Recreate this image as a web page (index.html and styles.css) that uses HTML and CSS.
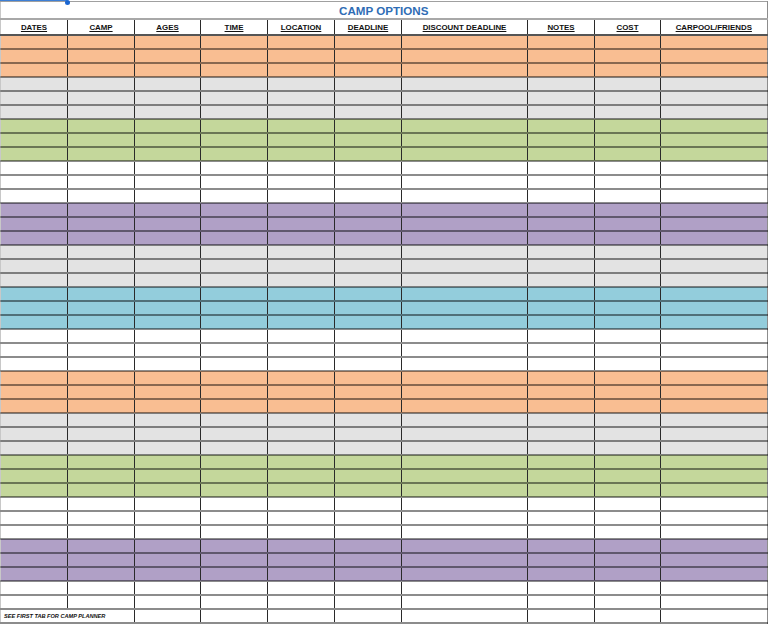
FILE: index.html
```html
<!DOCTYPE html>
<html>
<head>
<meta charset="utf-8">
<title>Camp Options</title>
<link rel="stylesheet" href="styles.css">
</head>
<body>
<div class="wrap">
<span class="sel-line"></span><span class="sel-dot"></span>
<table class="sheet">
<colgroup>
<col class="w67"><col class="w67"><col class="w66"><col class="w67"><col class="w67"><col class="w67"><col class="w126"><col class="w67"><col class="w66"><col class="w107">
</colgroup>
<tr class="title"><td colspan="10">CAMP OPTIONS</td></tr>
<tr class="head"><th>DATES</th><th>CAMP</th><th>AGES</th><th>TIME</th><th>LOCATION</th><th>DEADLINE</th><th>DISCOUNT DEADLINE</th><th>NOTES</th><th>COST</th><th>CARPOOL/FRIENDS</th></tr>
<tr class="r o"><td></td><td></td><td></td><td></td><td></td><td></td><td></td><td></td><td></td><td></td></tr>
<tr class="r o"><td></td><td></td><td></td><td></td><td></td><td></td><td></td><td></td><td></td><td></td></tr>
<tr class="r o"><td></td><td></td><td></td><td></td><td></td><td></td><td></td><td></td><td></td><td></td></tr>
<tr class="r g"><td></td><td></td><td></td><td></td><td></td><td></td><td></td><td></td><td></td><td></td></tr>
<tr class="r g"><td></td><td></td><td></td><td></td><td></td><td></td><td></td><td></td><td></td><td></td></tr>
<tr class="r g"><td></td><td></td><td></td><td></td><td></td><td></td><td></td><td></td><td></td><td></td></tr>
<tr class="r gr"><td></td><td></td><td></td><td></td><td></td><td></td><td></td><td></td><td></td><td></td></tr>
<tr class="r gr"><td></td><td></td><td></td><td></td><td></td><td></td><td></td><td></td><td></td><td></td></tr>
<tr class="r gr"><td></td><td></td><td></td><td></td><td></td><td></td><td></td><td></td><td></td><td></td></tr>
<tr class="r w"><td></td><td></td><td></td><td></td><td></td><td></td><td></td><td></td><td></td><td></td></tr>
<tr class="r w"><td></td><td></td><td></td><td></td><td></td><td></td><td></td><td></td><td></td><td></td></tr>
<tr class="r w"><td></td><td></td><td></td><td></td><td></td><td></td><td></td><td></td><td></td><td></td></tr>
<tr class="r p"><td></td><td></td><td></td><td></td><td></td><td></td><td></td><td></td><td></td><td></td></tr>
<tr class="r p"><td></td><td></td><td></td><td></td><td></td><td></td><td></td><td></td><td></td><td></td></tr>
<tr class="r p"><td></td><td></td><td></td><td></td><td></td><td></td><td></td><td></td><td></td><td></td></tr>
<tr class="r g"><td></td><td></td><td></td><td></td><td></td><td></td><td></td><td></td><td></td><td></td></tr>
<tr class="r g"><td></td><td></td><td></td><td></td><td></td><td></td><td></td><td></td><td></td><td></td></tr>
<tr class="r g"><td></td><td></td><td></td><td></td><td></td><td></td><td></td><td></td><td></td><td></td></tr>
<tr class="r b"><td></td><td></td><td></td><td></td><td></td><td></td><td></td><td></td><td></td><td></td></tr>
<tr class="r b"><td></td><td></td><td></td><td></td><td></td><td></td><td></td><td></td><td></td><td></td></tr>
<tr class="r b"><td></td><td></td><td></td><td></td><td></td><td></td><td></td><td></td><td></td><td></td></tr>
<tr class="r w"><td></td><td></td><td></td><td></td><td></td><td></td><td></td><td></td><td></td><td></td></tr>
<tr class="r w"><td></td><td></td><td></td><td></td><td></td><td></td><td></td><td></td><td></td><td></td></tr>
<tr class="r w"><td></td><td></td><td></td><td></td><td></td><td></td><td></td><td></td><td></td><td></td></tr>
<tr class="r o"><td></td><td></td><td></td><td></td><td></td><td></td><td></td><td></td><td></td><td></td></tr>
<tr class="r o"><td></td><td></td><td></td><td></td><td></td><td></td><td></td><td></td><td></td><td></td></tr>
<tr class="r o"><td></td><td></td><td></td><td></td><td></td><td></td><td></td><td></td><td></td><td></td></tr>
<tr class="r g"><td></td><td></td><td></td><td></td><td></td><td></td><td></td><td></td><td></td><td></td></tr>
<tr class="r g"><td></td><td></td><td></td><td></td><td></td><td></td><td></td><td></td><td></td><td></td></tr>
<tr class="r g"><td></td><td></td><td></td><td></td><td></td><td></td><td></td><td></td><td></td><td></td></tr>
<tr class="r gr"><td></td><td></td><td></td><td></td><td></td><td></td><td></td><td></td><td></td><td></td></tr>
<tr class="r gr"><td></td><td></td><td></td><td></td><td></td><td></td><td></td><td></td><td></td><td></td></tr>
<tr class="r gr"><td></td><td></td><td></td><td></td><td></td><td></td><td></td><td></td><td></td><td></td></tr>
<tr class="r w"><td></td><td></td><td></td><td></td><td></td><td></td><td></td><td></td><td></td><td></td></tr>
<tr class="r w"><td></td><td></td><td></td><td></td><td></td><td></td><td></td><td></td><td></td><td></td></tr>
<tr class="r w"><td></td><td></td><td></td><td></td><td></td><td></td><td></td><td></td><td></td><td></td></tr>
<tr class="r p"><td></td><td></td><td></td><td></td><td></td><td></td><td></td><td></td><td></td><td></td></tr>
<tr class="r p"><td></td><td></td><td></td><td></td><td></td><td></td><td></td><td></td><td></td><td></td></tr>
<tr class="r p"><td></td><td></td><td></td><td></td><td></td><td></td><td></td><td></td><td></td><td></td></tr>
<tr class="r w"><td></td><td></td><td></td><td></td><td></td><td></td><td></td><td></td><td></td><td></td></tr>
<tr class="r w"><td></td><td></td><td></td><td></td><td></td><td></td><td></td><td></td><td></td><td></td></tr>
<tr class="r w foot"><td colspan="2">SEE FIRST TAB FOR CAMP PLANNER</td><td></td><td></td><td></td><td></td><td></td><td></td><td></td><td></td></tr>
</table>
</div>
</body>
</html>
```
FILE: styles.css
```css
html, body {
  margin: 0;
  padding: 0;
  background: #ffffff;
}
.wrap {
  position: relative;
  width: 768px;
  padding-top: 1px;
}
.sel-line {
  position: absolute;
  left: 0;
  top: 0;
  width: 67px;
  height: 1px;
  background: #3d7fd6;
  z-index: 2;
}
.sel-dot {
  position: absolute;
  left: 65px;
  top: 0;
  width: 5px;
  height: 5px;
  border-radius: 50%;
  background: #1a66d1;
  z-index: 3;
}
.sheet {
  border-collapse: collapse;
  table-layout: fixed;
  width: 767px;
  font-family: "Liberation Sans", Arial, sans-serif;
}
.w67 { width: 67px; }
.w66 { width: 66px; }
.w126 { width: 126px; }
.w107 { width: 107px; }

.title td {
  height: 14px;
  padding: 2px 0 0 0;
  border-top: 1px solid #a0a0a0;
  border-bottom: 2px solid #a8a8a8;
  border-left: 1px solid #c8c8c8;
  border-right: 2px solid #8c8c8c;
  text-align: center;
  vertical-align: middle;
  font-size: 11.6px;
  font-weight: bold;
  color: #2f6db5;
  line-height: 14px;
}
.head th {
  height: 13px;
  padding: 1px 0 0 0;
  border-right: 1px solid #2a2a2a;
  border-bottom: 2px solid #555555;
  font-size: 7.9px;
  font-weight: bold;
  text-decoration: underline;
  color: #111111;
  text-align: center;
  vertical-align: middle;
  line-height: 13px;
  white-space: nowrap;
}
.head th:first-child { border-left: 1px solid #c8c8c8; }
.head th:last-child { border-right: 2px solid #8c8c8c; }

.r td {
  height: 12px;
  padding: 0;
  border-right: 1px solid #2a2a2a;
  border-bottom: 2px solid rgba(0, 0, 0, 0.45);
}
.r td:first-child { border-left: 1px solid #c8c8c8; }
.r td:last-child { border-right: 2px solid #8c8c8c; }

.o td { background: #f9be92; }
.g td { background: #e3e3e3; }
.gr td { background: #c4d79b; }
.w td { background: #ffffff; }
.p td { background: #b0a0c6; }
.b td { background: #93cddc; }

.foot td:first-child {
  font-size: 5.6px;
  font-weight: bold;
  font-style: italic;
  color: #111111;
  padding-left: 3px;
  line-height: 12px;
  white-space: nowrap;
  vertical-align: middle;
}
```
